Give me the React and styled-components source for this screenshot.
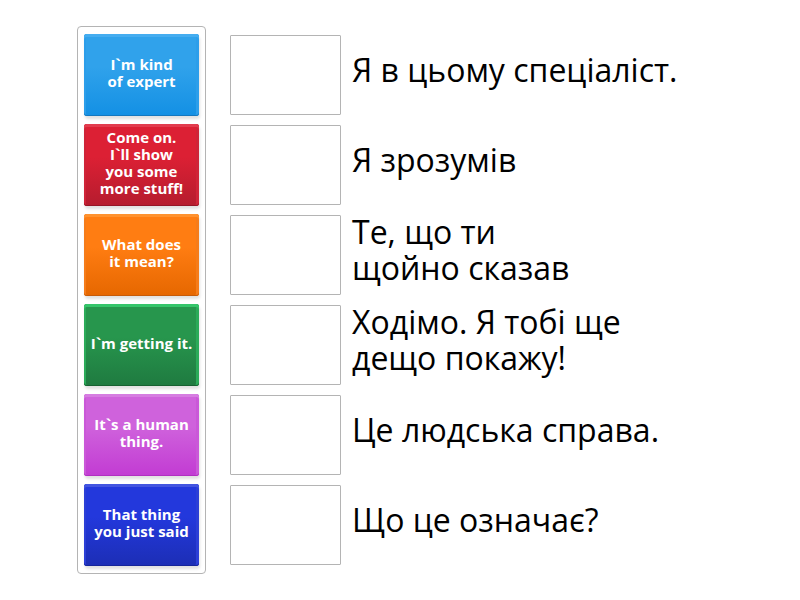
import React from 'react';
import styled, { createGlobalStyle } from 'styled-components';

const matches = [
  {
    tile: 'I`m kind\nof expert',
    definition: 'Я в цьому спеціаліст.',
    color: { from: '#30a2eb', to: '#1390e4', light: '#45adf0', side: '#2c9eea', dark: '#1478bf' },
  },
  {
    tile: 'Come on.\nI`ll show\nyou some\nmore stuff!',
    definition: 'Я зрозумів',
    color: { from: '#dc2034', to: '#b51c2e', light: '#e23c4e', side: '#cf2438', dark: '#961526' },
  },
  {
    tile: 'What does\nit mean?',
    definition: 'Те, що ти\nщойно сказав',
    color: { from: '#ff7d12', to: '#e66700', light: '#ff922f', side: '#f57c1a', dark: '#c75b08' },
  },
  {
    tile: 'I`m getting it.',
    definition: 'Ходімо. Я тобі ще\nдещо покажу!',
    color: { from: '#27964d', to: '#1f7a40', light: '#35c56a', side: '#2bab59', dark: '#176131' },
  },
  {
    tile: 'It`s a human\nthing.',
    definition: 'Це людська справа.',
    color: { from: '#cf62dc', to: '#c23bd3', light: '#d67de1', side: '#ca58d8', dark: '#b02fc0' },
  },
  {
    tile: 'That thing\nyou just said',
    definition: 'Що це означає?',
    color: { from: '#2338dc', to: '#1c2eb5', light: '#4355e0', side: '#2c3fd6', dark: '#16259a' },
  },
];

const App = () => {
  return (
    <>
      <GlobalStyle />
      <Board>
        <Tray>
          {matches.map(({ tile, color }) => (
            <Tile key={tile} type='button' $color={color}>
              {tile}
            </Tile>
          ))}
        </Tray>
        <Definitions>
          {matches.map(({ definition }) => (
            <DefinitionRow key={definition}>
              <DropZone />
              <Definition>{definition}</Definition>
            </DefinitionRow>
          ))}
        </Definitions>
      </Board>
    </>
  );
};

const GlobalStyle = createGlobalStyle`
  body {
    margin: 0;
    background-color: white;
    font-family: 'Open Sans', 'Noto Sans', sans-serif;
  }
`;

const Board = styled.main`
  display: flex;
  align-items: center;
  gap: 24px;
  padding: 26px 77px;
`;

const Tray = styled.div`
  display: flex;
  flex-direction: column;
  flex-shrink: 0;
  gap: 8px;
  padding: 7px 6px;
  border: 1px solid #b4b4b4;
  border-radius: 4px;
`;

const Tile = styled.button`
  width: 115px;
  height: 82px;
  padding: 0 0 4px;
  border: none;
  border-radius: 3px;
  background: linear-gradient(${({ $color }) => `${$color.from} 40%, ${$color.to}`});
  box-shadow:
    inset 0 3px ${({ $color }) => $color.light},
    inset 0 -1px ${({ $color }) => $color.dark},
    inset -3px 0 ${({ $color }) => $color.side},
    inset 2px 0 ${({ $color }) => $color.side},
    1px 3px 3px rgba(0, 0, 0, 0.12);
  color: white;
  font-family: inherit;
  font-size: 15px;
  font-weight: 700;
  line-height: 17px;
  text-align: center;
  white-space: pre;
  cursor: pointer;
`;

const Definitions = styled.ul`
  display: flex;
  flex-direction: column;
  flex-grow: 1;
  gap: 10px;
  margin: 0;
  padding: 0;
  list-style: none;
`;

const DefinitionRow = styled.li`
  display: flex;
  align-items: center;
  gap: 11px;
  height: 80px;
`;

const DropZone = styled.div`
  flex-shrink: 0;
  width: 111px;
  height: 80px;
  box-sizing: border-box;
  border: 1px solid #b4b4b4;
  border-radius: 1px;
`;

const Definition = styled.p`
  margin: 0;
  padding-bottom: 10px;
  color: black;
  font-size: 32px;
  line-height: 36px;
  white-space: pre-line;
`;

export default App;
